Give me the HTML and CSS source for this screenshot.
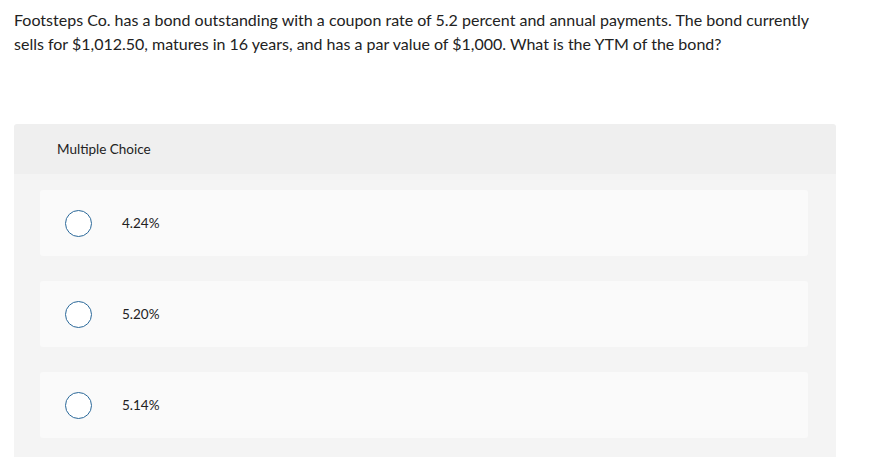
FILE: index.html
```html
<!DOCTYPE html>
<html>
<head>
<meta charset="utf-8">
<link rel="stylesheet" href="styles.css">
</head>
<body>
<div class="page">
  <p class="question">Footsteps Co. has a bond outstanding with a coupon rate of 5.2 percent and annual payments. The bond currently sells for $1,012.50, matures in 16 years, and has a par value of $1,000. What is the YTM of the bond?</p>
  <div class="panel">
    <div class="panel-head">Multiple Choice</div>
    <div class="panel-body">
      <div class="option"><span class="radio"></span><span class="label">4.24%</span></div>
      <div class="option"><span class="radio"></span><span class="label">5.20%</span></div>
      <div class="option"><span class="radio"></span><span class="label">5.14%</span></div>
    </div>
  </div>
</div>
</body>
</html>
```

FILE: styles.css
```css
html, body {
  margin: 0;
  padding: 0;
  background: #ffffff;
}
body {
  font-family: "Lato", "Open Sans", sans-serif;
  color: #222222;
  overflow: hidden;
}
.page {
  padding: 8px 0 0 14px;
  width: 822px;
}
.question {
  margin: 0;
  font-size: 16px;
  line-height: 24px;
  width: 810px;
}
.panel {
  margin-top: 68px;
  width: 822px;
  border-radius: 3px 3px 0 0;
  overflow: hidden;
}
.panel-head {
  background: #efefef;
  height: 50px;
  display: flex;
  align-items: center;
  padding-left: 43px;
  font-size: 13.5px;
}
.panel-body {
  background: #f4f4f4;
  padding: 16px 28px 20px 26px;
  display: flex;
  flex-direction: column;
  gap: 25px;
}
.option {
  background: #fafafa;
  border-radius: 3px;
  height: 66px;
  display: flex;
  align-items: center;
  padding-left: 25px;
}
.radio {
  width: 25px;
  height: 25px;
  border: 1.5px solid #2a6899;
  border-radius: 50%;
  background: #ffffff;
  flex: none;
}
.label {
  margin-left: 30px;
  font-size: 13.5px;
}
```
